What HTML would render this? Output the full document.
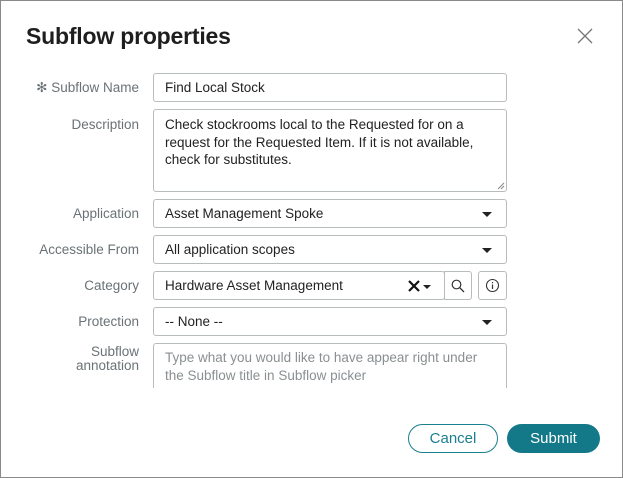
<!DOCTYPE html>
<html><head><style>
body{margin:0;width:623px;height:478px;overflow:hidden;font-family:"Liberation Sans",sans-serif;background:#fff}
.frame{position:absolute;left:0;top:0;width:621px;height:476px;border:1px solid #8a8a8a}
.t{position:absolute;left:26px;top:23px;font-size:23px;font-weight:bold;color:#1e1e1e;letter-spacing:-0.2px}
.x{position:absolute;left:577px;top:28px}
.lab{position:absolute;right:484px;font-size:13.5px;color:#6a7276;text-align:right;line-height:14px}
.in{position:absolute;left:153px;width:351px;border:1px solid #b7bcbf;border-radius:3px;box-sizing:border-box;font-size:13.5px;color:#222;padding-left:11px}
.one{height:29px;line-height:27px}
.car{position:absolute;right:14px;top:12px;width:0;height:0;border-left:5px solid transparent;border-right:5px solid transparent;border-top:5px solid #222}
.btn{position:absolute;top:424px;height:29px;border-radius:15px;box-sizing:border-box;font-size:15px;text-align:center}
</style></head><body>
<div class="frame"></div>
<div class="t">Subflow properties</div>
<svg class="x" width="16" height="16"><path d="M1 1L15 15M15 1L1 15" stroke="#777" stroke-width="1.3"/></svg>

<div class="lab" style="top:81px">✻ Subflow Name</div>
<div class="in one" style="top:73px;width:354px">Find Local Stock</div>

<div class="lab" style="top:118px">Description</div>
<div class="in" style="top:109px;height:83px;width:354px;padding-top:6px;line-height:17.5px">Check stockrooms local to the Requested for on a request for the Requested Item. If it is not available, check for substitutes.
<svg style="position:absolute;right:1px;bottom:1px" width="8" height="8"><path d="M7 1L1 7M7 4L4 7" stroke="#888"/></svg></div>

<div class="lab" style="top:207px">Application</div>
<div class="in one" style="top:199px;width:354px">Asset Management Spoke<div class="car"></div></div>

<div class="lab" style="top:243px">Accessible From</div>
<div class="in one" style="top:235px;width:354px">All application scopes<div class="car"></div></div>

<div class="lab" style="top:279px">Category</div>
<div class="in one" style="top:271px;width:292px">Hardware Asset Management
<svg style="position:absolute;left:254px;top:8px" width="12" height="12"><path d="M1 1L11 11M11 1L1 11" stroke="#111" stroke-width="2.2"/></svg>
<div style="position:absolute;left:269px;top:13px;border-left:4px solid transparent;border-right:4px solid transparent;border-top:4px solid #222"></div></div>
<div class="in one" style="top:271px;left:444px;width:28px;padding:0;border-radius:0 3px 3px 0"><svg style="position:absolute;left:6px;top:7px" width="14" height="14"><circle cx="5.5" cy="5.5" r="4.3" fill="none" stroke="#333" stroke-width="1.2"/><path d="M8.7 8.7L13 13" stroke="#333" stroke-width="1.3"/></svg></div>
<div class="in one" style="top:271px;left:478px;width:29px;padding:0"><svg style="position:absolute;left:6px;top:6px" width="15" height="15"><circle cx="7.5" cy="7.5" r="6" fill="none" stroke="#333" stroke-width="1.1"/><path d="M7.5 6.5V11M7.5 4v1.3" stroke="#333" stroke-width="1.2"/></svg></div>

<div class="lab" style="top:315px">Protection</div>
<div class="in one" style="top:307px;width:354px">-- None --<div class="car"></div></div>

<div class="lab" style="top:345px">Subflow<br>annotation</div>
<div style="position:absolute;left:153px;top:343px;width:354px;height:45px;overflow:hidden">
<div class="in" style="left:0;top:0;height:70px;width:354px;padding-top:5px;padding-right:20px;line-height:18px;color:#8a8f92">Type what you would like to have appear right under the Subflow title in Subflow picker</div></div>

<div class="btn" style="left:408px;width:90px;border:1px solid #1a7f8e;color:#1a7f8e;line-height:27px">Cancel</div>
<div class="btn" style="left:507px;width:93px;background:#137888;color:#fff;line-height:29px">Submit</div>
</body></html>
